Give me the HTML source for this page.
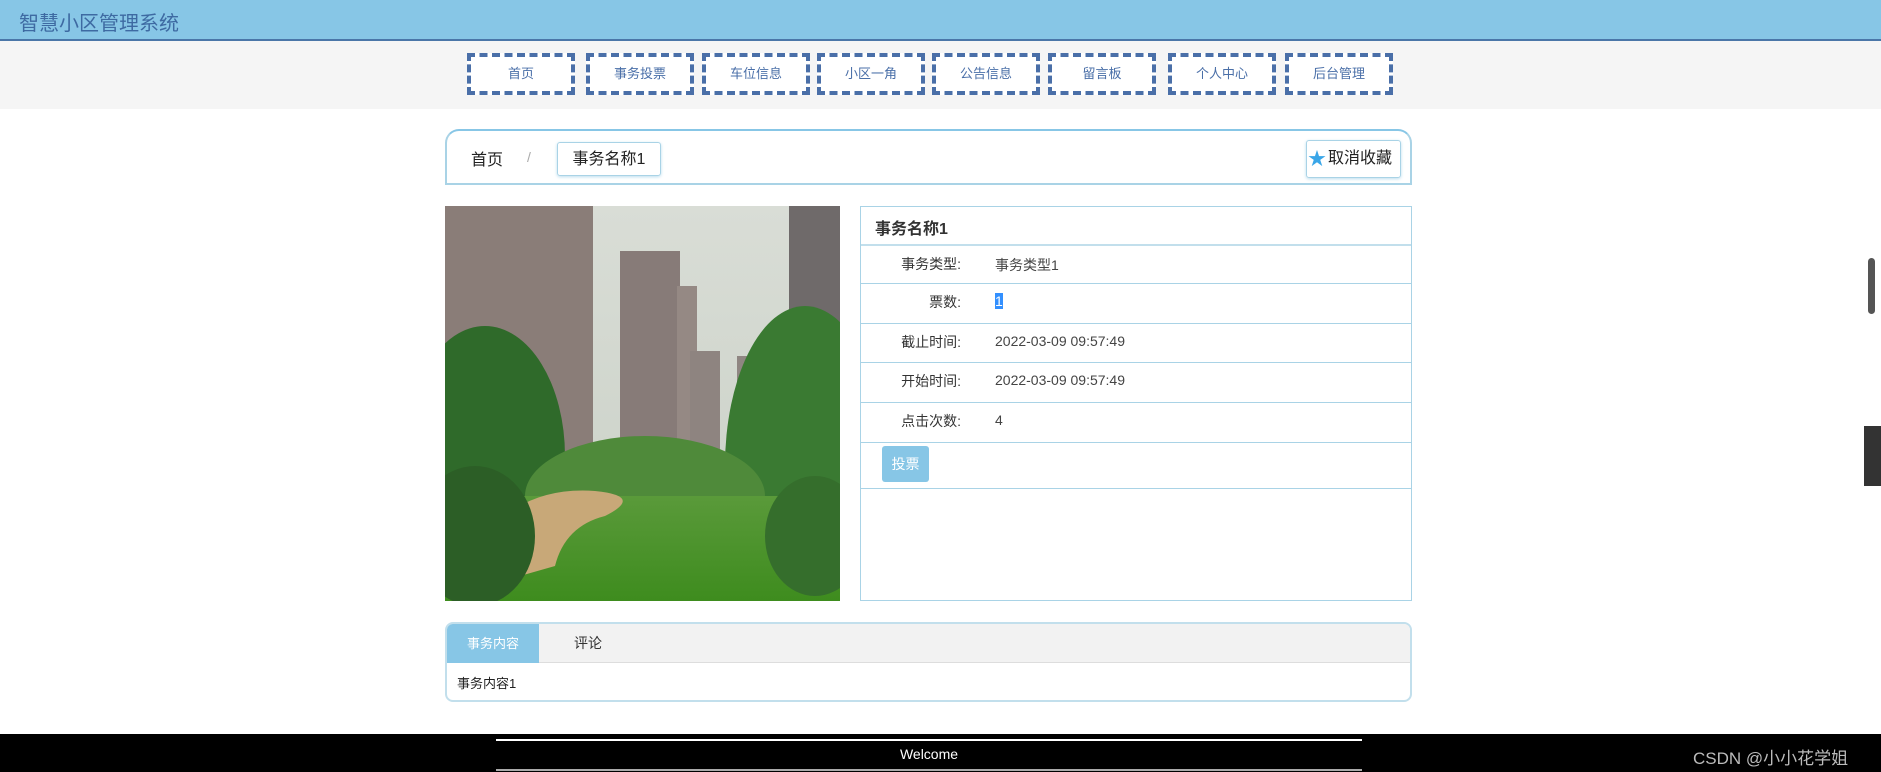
<!DOCTYPE html>
<html><head><meta charset="utf-8"><style>
*{margin:0;padding:0;box-sizing:border-box}
body{width:1881px;height:772px;overflow:hidden;background:#fff;font-family:"Liberation Sans","Noto Sans CJK SC",sans-serif;position:relative}
.hdr{position:absolute;left:0;top:0;width:1881px;height:41px;background:#87c6e6;border-bottom:2px solid #4a76a8}
.hdr span{position:absolute;left:19px;top:7px;font-size:20px;color:#3e6aa2}
.navband{position:absolute;left:0;top:41px;width:1881px;height:68px;background:#f5f5f5}
.nav{position:absolute;top:53px;width:108px;height:42px;border:4px dashed #4a6fa8;font-size:13px;color:#4a6fa8;text-align:center;line-height:34px;background:#fff}
.bc{position:absolute;left:445px;top:129px;width:967px;height:56px;border:2px solid #a9d3e6;border-top-color:#87c6e6;border-radius:14px 14px 0 0;border-bottom:2px solid #a9d3e6}
.bc .h{position:absolute;left:24px;top:15px;font-size:16px;color:#222}
.bc .s{position:absolute;left:80px;top:18px;font-size:14px;color:#aaa}
.bc .cur{position:absolute;left:110px;top:11px;width:104px;height:34px;border:1px solid #a9d3e6;border-radius:3px;font-size:16px;line-height:34px;text-align:center;color:#222;box-shadow:0 1px 3px #bde}
.bc .fav{position:absolute;right:9px;top:9px;width:95px;height:38px;border:1px solid #a9d3e6;border-radius:3px;font-size:16px;line-height:36px;text-align:right;padding-right:8px;color:#222;box-shadow:0 1px 3px #bde}
.bc .fav b{position:absolute;left:1px;top:0;color:#3aa6e8;font-size:18px}
.img{position:absolute;left:445px;top:206px;width:395px;height:395px}
.info{position:absolute;left:860px;top:206px;width:552px;height:395px;border:1px solid #a9d3e6}
.row{position:absolute;left:0;width:550px;border-bottom:1px solid #a9d3e6;font-size:14px;color:#333}
.row .l{position:absolute;right:450px;top:8px}
.row .v{position:absolute;left:134px;top:9px;color:#444}
.btn{position:absolute;left:21px;top:3px;width:47px;height:36px;background:#87c6e6;color:#fff;border-radius:3px;font-size:14px;line-height:36px;text-align:center}
.tabs{position:absolute;left:445px;top:622px;width:967px;height:80px;border:2px solid #c2dfec;border-radius:8px;overflow:hidden}
.tabh{position:absolute;left:0;top:0;width:967px;height:39px;background:#f2f2f2;border-bottom:1px solid #ddd}
.tab1{position:absolute;left:0;top:0;width:92px;height:39px;background:#87c6e6;color:#fff;font-size:13px;line-height:39px;text-align:center}
.tab2{position:absolute;left:127px;top:0;font-size:14px;line-height:39px;color:#333}
.tc{position:absolute;left:10px;top:49px;font-size:13px;color:#222}
.foot{position:absolute;left:0;top:734px;width:1881px;height:38px;background:#000}
.foot .l1{position:absolute;left:496px;top:5px;width:866px;height:2px;background:#fff}
.foot .l2{position:absolute;left:496px;top:35px;width:866px;height:2px;background:#aaa}
.foot .w{position:absolute;left:0;width:1858px;text-align:center;top:12px;font-size:14px;color:#fff}
.foot .c{position:absolute;left:1693px;top:10px;font-size:17px;color:#bbb}
</style></head><body>
<div class="hdr"><span>智慧小区管理系统</span></div>
<div class="navband"></div>
<div class="nav" style="left:467px">首页</div>
<div class="nav" style="left:586px">事务投票</div>
<div class="nav" style="left:702px">车位信息</div>
<div class="nav" style="left:817px">小区一角</div>
<div class="nav" style="left:932px">公告信息</div>
<div class="nav" style="left:1048px">留言板</div>
<div class="nav" style="left:1168px">个人中心</div>
<div class="nav" style="left:1285px">后台管理</div>
<div class="bc"><span class="h">首页</span><span class="s">/</span><div class="cur">事务名称1</div><div class="fav"><b>★</b>取消收藏</div></div>
<svg class="img" viewBox="0 0 395 395">
<defs><linearGradient id="sky" x1="0" y1="0" x2="0" y2="1"><stop offset="0" stop-color="#d9ddd6"/><stop offset="1" stop-color="#c9d0c6"/></linearGradient>
<linearGradient id="gr" x1="0" y1="0" x2="0" y2="1"><stop offset="0" stop-color="#5a9a3a"/><stop offset="1" stop-color="#3e8c1e"/></linearGradient></defs>
<rect width="395" height="395" fill="url(#sky)"/>
<rect x="0" y="0" width="148" height="320" fill="#8a7d78"/>
<rect x="175" y="45" width="60" height="260" fill="#877b78"/>
<rect x="232" y="80" width="20" height="220" fill="#958984"/>
<rect x="245" y="145" width="30" height="160" fill="#8e8480"/>
<rect x="292" y="150" width="20" height="140" fill="#8f8682"/>
<rect x="344" y="0" width="51" height="200" fill="#6f6a6a"/>
<ellipse cx="40" cy="250" rx="80" ry="130" fill="#2f6a2a"/>
<ellipse cx="360" cy="260" rx="80" ry="160" fill="#3a7a32"/>
<ellipse cx="200" cy="290" rx="120" ry="60" fill="#4f8a3a"/>
<rect x="0" y="290" width="395" height="105" fill="url(#gr)"/>
<path d="M40 330 Q80 280 150 285 Q200 290 160 310 Q120 320 110 360 L40 380 Z" fill="#c8a878"/>
<ellipse cx="30" cy="330" rx="60" ry="70" fill="#2c5e26"/>
<ellipse cx="370" cy="330" rx="50" ry="60" fill="#356e2c"/>
</svg>
<div class="info">
<div class="row" style="top:0;height:39px;border-bottom:2px solid #c2dfec"><span style="position:absolute;left:14px;top:8px;font-size:16px;font-weight:bold;color:#333">事务名称1</span></div>
<div class="row" style="top:39px;height:38px"><span class="l">事务类型:</span><span class="v">事务类型1</span></div>
<div class="row" style="top:77px;height:40px"><span class="l">票数:</span><span class="v" style="background:#3390ff;color:#fff">1</span></div>
<div class="row" style="top:117px;height:39px"><span class="l">截止时间:</span><span class="v">2022-03-09 09:57:49</span></div>
<div class="row" style="top:156px;height:40px"><span class="l">开始时间:</span><span class="v">2022-03-09 09:57:49</span></div>
<div class="row" style="top:196px;height:40px"><span class="l">点击次数:</span><span class="v">4</span></div>
<div class="row" style="top:236px;height:46px"><div class="btn">投票</div></div>
</div>
<div class="tabs"><div class="tabh"><div class="tab1">事务内容</div><div class="tab2">评论</div></div><div class="tc">事务内容1</div></div>
<div style="position:absolute;left:1868px;top:258px;width:7px;height:56px;background:#555;border-radius:4px"></div>
<div style="position:absolute;left:1864px;top:426px;width:17px;height:60px;background:#333"></div>
<div class="foot"><div class="l1"></div><div class="w">Welcome</div><div class="l2"></div><div class="c">CSDN @小小花学姐</div></div>
</body></html>
